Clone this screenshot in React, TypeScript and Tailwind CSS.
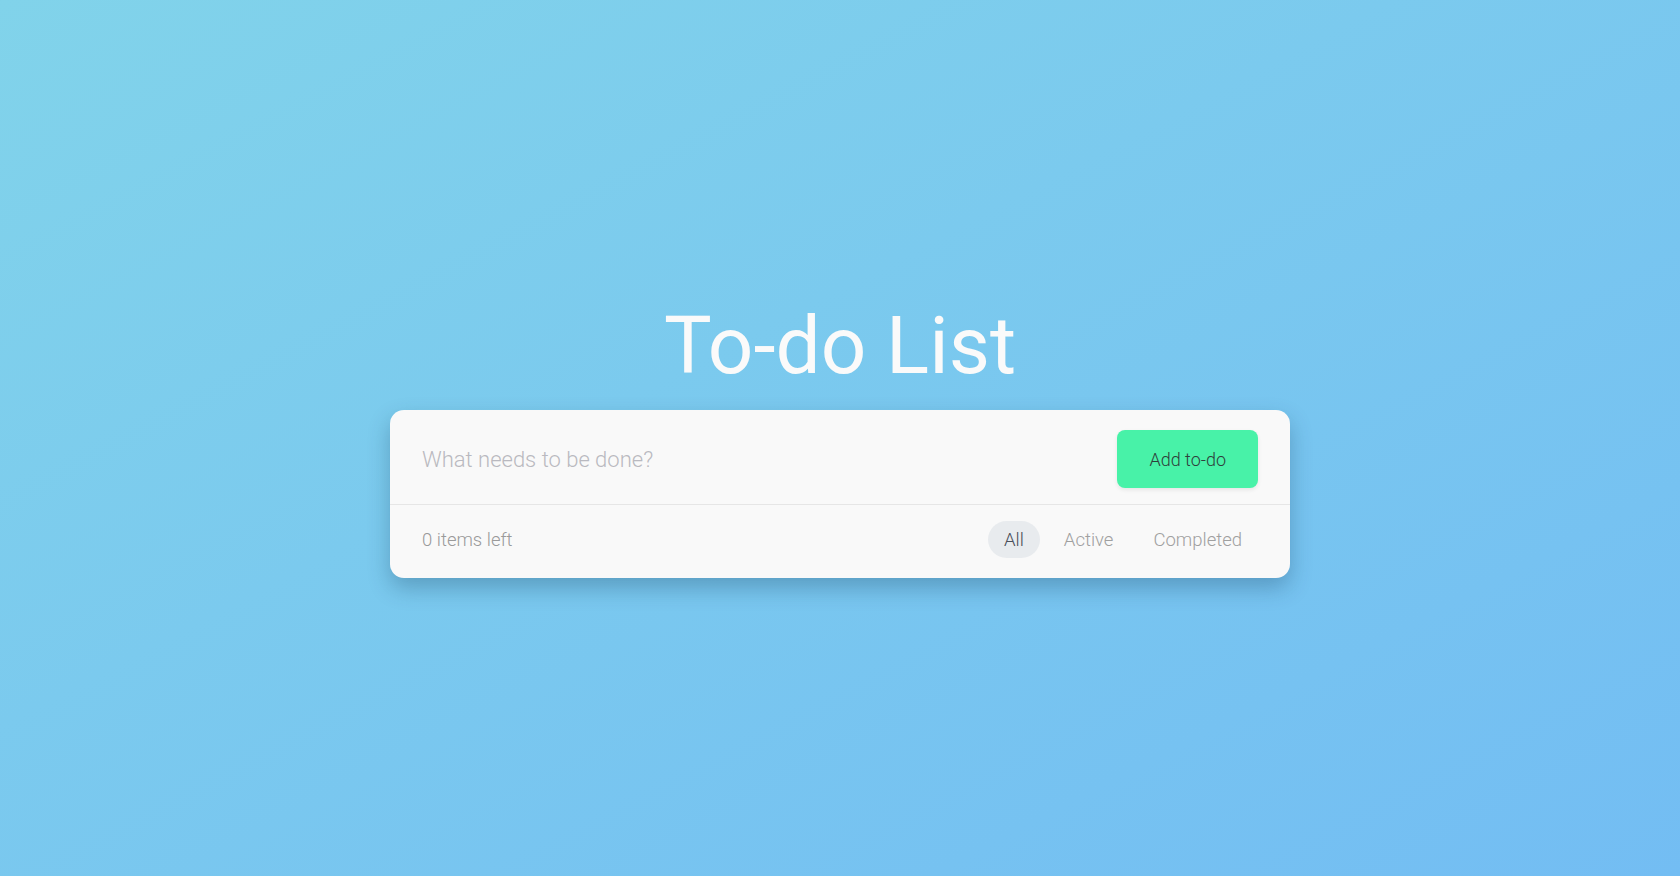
import { useState } from 'react'

const filters = ['All', 'Active', 'Completed']

export default function App() {
  const [active, setActive] = useState('All')

  return (
    <div className="min-h-screen w-full flex flex-col items-center justify-center bg-gradient-to-br from-[#81d3ea] to-[#73bdf3] font-['Roboto',sans-serif]">
      <h1 className="text-[80px] leading-[94px] font-normal text-[#fafafa] mb-[17px]">To-do List</h1>

      <div className="w-[900px] rounded-[14px] bg-[#f9f9f9] shadow-[0_10px_22px_rgba(20,60,90,0.3)] overflow-hidden">
        {/* Input row */}
        <div className="flex items-center justify-between pl-8 pr-8 pt-5 pb-4 border-b border-[#e6e6e6]">
          <input
            className="flex-1 bg-transparent outline-none pt-[2px] text-[22px] font-light text-[#555] placeholder:text-[#b9b9c0]"
            placeholder="What needs to be done?"
          />
          <button className="h-[58px] px-8 pt-[2px] rounded-lg bg-[#48f2a8] text-[18px] font-light text-[#2f3f3c] shadow-[0_2px_4px_rgba(0,0,0,0.08)]">
            Add to-do
          </button>
        </div>

        {/* Footer */}
        <div className="flex items-center justify-between pl-8 pr-8 pt-4 pb-5">
          <span className="pt-[4px] text-[18.5px] font-light text-[#9a9a9a]">0 items left</span>
          <div className="flex items-center gap-2">
            {filters.map((f) => (
              <button
                key={f}
                onClick={() => setActive(f)}
                className={
                  f === active
                    ? 'h-[37px] px-4 pt-[3px] rounded-full bg-[#e8ebee] text-[18.5px] font-light text-[#4a4f5a]'
                    : 'h-[37px] px-4 pt-[3px] rounded-full text-[18.5px] font-light text-[#a0a0a0]'
                }
              >
                {f}
              </button>
            ))}
          </div>
        </div>
      </div>
    </div>
  )
}
